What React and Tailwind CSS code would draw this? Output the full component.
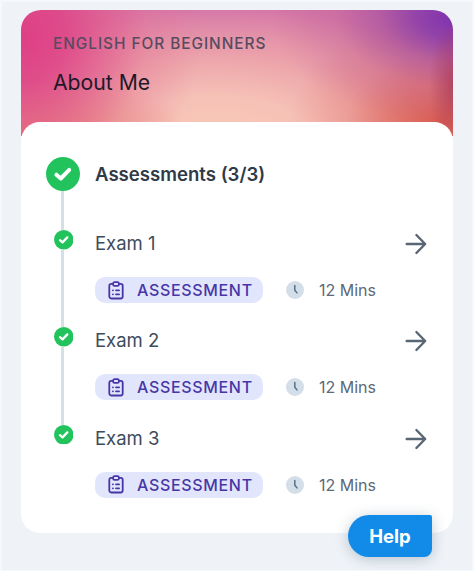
import React from "react";

const exams = ["Exam 1", "Exam 2", "Exam 3"];

function CheckDot({ size }) {
  return (
    <svg width={size} height={size} viewBox="0 0 34 34" className="shrink-0">
      <circle cx="17" cy="17" r="17" fill="#22c35d" />
      <path d="M10.4 17.7 L14.8 21.5 L23.2 12.9" fill="none" stroke="#fff" strokeWidth="4" strokeLinecap="round" strokeLinejoin="round" />
    </svg>
  );
}

function ClipboardIcon() {
  return (
    <svg width="16" height="19" viewBox="0 0 16 19" fill="none" stroke="#4836a6" strokeWidth="1.8" strokeLinecap="round" strokeLinejoin="round">
      <path d="M5 2.9H3.2A1.9 1.9 0 0 0 1.3 4.8V15.6A1.9 1.9 0 0 0 3.2 17.5H12.8A1.9 1.9 0 0 0 14.7 15.6V4.8A1.9 1.9 0 0 0 12.8 2.9H11" />
      <rect x="5.1" y="1.2" width="5.8" height="3.7" rx="1.5" />
      <path d="M4.9 9.3H5M8 9.3H11.1M4.9 13.3H5M8 13.3H11.1" />
    </svg>
  );
}

function ClockIcon() {
  return (
    <svg width="18" height="18" viewBox="0 0 18 18" className="ml-[23px] shrink-0">
      <circle cx="9" cy="9" r="9" fill="#d4dee8" />
      <path d="M8.8 4.6V9.2L11 11.9" fill="none" stroke="#557089" strokeWidth="1.5" strokeLinecap="round" strokeLinejoin="round" />
    </svg>
  );
}

function ArrowIcon() {
  return (
    <svg width="22" height="22" viewBox="0 0 22 22" fill="none" stroke="#596673" strokeWidth="2.4" strokeLinecap="round" strokeLinejoin="round">
      <path d="M1.7 11H20M11.4 2L20.2 11L11.4 20" />
    </svg>
  );
}

function ExamRow({ name, last }) {
  return (
    <li className="flex h-[97.4px]">
      <div className="flex w-[34px] shrink-0 flex-col items-center">
        <div className="ml-[1px] flex">
          <CheckDot size={19.5} />
        </div>
        {!last && <div className="mr-[1px] w-[3px] flex-1 bg-[#d5dfe7]" />}
      </div>
      <div className="ml-[15px] flex-1">
        <div className="flex h-[28px] items-center justify-between">
          <span className="-mt-[2px] text-[18.5px] leading-[28px] text-[#3e4b5a]">{name}</span>
          <ArrowIcon />
        </div>
        <div className="mt-[19px] flex h-[26px] items-center">
          <div className="flex h-[26px] w-[168px] items-center rounded-[10px] bg-[#e1e6fd] pl-[13px]">
            <ClipboardIcon />
            <span className="ml-[13px] text-[16px] font-medium leading-[26px] tracking-[0.67px] text-[#4836a6]">ASSESSMENT</span>
          </div>
          <ClockIcon />
          <span className="ml-[15px] whitespace-nowrap text-[16px] leading-[26px] text-[#5c6977]">12 Mins</span>
        </div>
      </div>
    </li>
  );
}

export default function App() {
  return (
    <div className="h-[571px] w-[474px] overflow-hidden bg-[#f6f9fc] px-[2px] pt-[2px] font-['Inter',sans-serif]">
      <main className="relative h-[568px] bg-[#eff3f8] pl-[19px] pt-[8px]">
        <section className="w-[432px]">
          <header className="h-[126px] rounded-t-[20px] bg-[radial-gradient(ellipse_24px_65px_at_100%_60%,#a2304fa0_0%,#a2304f00_100%),radial-gradient(ellipse_190px_110px_at_102%_5%,#7a2fb0_0%,#8639aad8_23%,#9f489f98_43%,#b9589850_66%,#c9609a00_100%),radial-gradient(ellipse_150px_110px_at_97%_88%,#d95d4f_0%,#dd685cc0_30%,#e2787258_62%,#e67d7600_100%),radial-gradient(ellipse_180px_180px_at_0%_22%,#de3f85_0%,#de4487e0_25%,#e0558cb0_45%,#e46f9450_70%,#e98a9a00_100%),radial-gradient(ellipse_170px_75px_at_0%_105%,#e77c67_0%,#e77c6700_100%),radial-gradient(ellipse_280px_135px_at_45%_105%,#facbb8_0%,#f6c3b8f0_35%,#efaeb080_68%,#eaa0a600_100%),linear-gradient(180deg,#d576a8_0%,#e690a3_38%,#ea968f_100%)] pl-8 pt-[24px]">
            <p className="text-[15.4px] font-medium leading-[20px] tracking-[0.95px] text-[#574b61]">ENGLISH FOR BEGINNERS</p>
            <h1 className="mt-[14px] text-[21.2px] leading-[28px] text-[#21192a]">About Me</h1>
          </header>
          <div className="-mt-[14px] h-[411px] rounded-[19px] bg-white pl-[25px] pr-[26px] pt-[35px]">
            <div className="flex h-[73px]">
              <div className="flex w-[34px] shrink-0 flex-col items-center">
                <CheckDot size={34} />
                <div className="mr-[1px] w-[3px] flex-1 bg-[#d5dfe7]" />
              </div>
              <h2 className="ml-[15px] text-[18.6px] font-semibold leading-[34px] text-[#303946]">Assessments (3/3)</h2>
            </div>
            <ul>
              {exams.map((name, i) => (
                <ExamRow key={name} name={name} last={i === exams.length - 1} />
              ))}
            </ul>
          </div>
        </section>
        <button className="absolute left-[346px] top-[513px] h-[42px] w-[84px] rounded-bl-[21px] rounded-br-[8px] rounded-tl-[21px] rounded-tr-[2px] bg-[#118ae8] text-[18.5px] font-bold leading-[42px] text-white shadow-[0_2px_14px_rgba(40,65,95,0.28)]">Help</button>
      </main>
    </div>
  );
}
